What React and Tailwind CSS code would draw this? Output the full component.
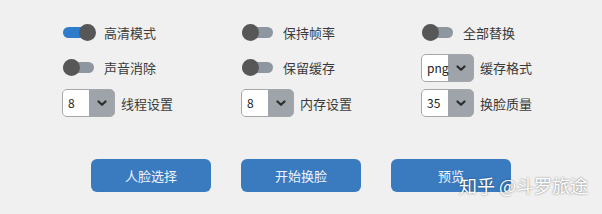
import { useState } from "react";

const FONT = { fontFamily: '"Noto Sans CJK SC", "Noto Sans", sans-serif' };

function Toggle({ on }) {
  return (
    <div className="relative w-[33px] h-[17px] shrink-0">
      <div
        className={
          "absolute left-0 right-[2px] top-[3px] h-[11px] rounded-full " +
          (on ? "bg-[#2f7ccd]" : "bg-[#8e979f]")
        }
      />
      <div
        className={
          "absolute top-0 w-[17px] h-[17px] rounded-full bg-[#575757] " +
          (on ? "right-0" : "left-0")
        }
      />
    </div>
  );
}

function Chevron() {
  return (
    <svg width="10" height="7" viewBox="0 0 10 7">
      <path d="M1.5 1.5 L5 4.8 L8.5 1.5" fill="none" stroke="#2d2d2d" strokeWidth="2.2" strokeLinecap="round" strokeLinejoin="round" />
    </svg>
  );
}

function Select({ value }) {
  return (
    <div className="flex w-[53px] h-[28px] shrink-0 rounded-[5px] border border-[#a4a8ac] overflow-hidden bg-[#9ea4aa]">
      <div className="w-[26px] h-full bg-white flex items-center pl-[5px] text-[12px] text-[#222]">
        {value}
      </div>
      <div className="flex-1 flex items-center justify-center pt-[1px]">
        <Chevron />
      </div>
    </div>
  );
}

function Item({ children, label, gap }) {
  return (
    <div className={"flex items-center " + gap}>
      {children}
      <span className="text-[13px] text-[#3a3a3a] leading-none">{label}</span>
    </div>
  );
}

export default function App() {
  const [items] = useState([
    { kind: "toggle", on: true, label: "高清模式" },
    { kind: "toggle", on: false, label: "保持帧率" },
    { kind: "toggle", on: false, label: "全部替换" },
    { kind: "toggle", on: false, label: "声音消除" },
    { kind: "toggle", on: false, label: "保留缓存" },
    { kind: "select", value: "png", label: "缓存格式" },
    { kind: "select", value: "8", label: "线程设置" },
    { kind: "select", value: "8", label: "内存设置" },
    { kind: "select", value: "35", label: "换脸质量" },
  ]);

  return (
    <div className="relative w-[602px] h-[214px] bg-[#f0f0f0] overflow-hidden" style={FONT}>
      <div className="grid grid-cols-[179px_180px_120px] grid-rows-[28px_28px_28px] gap-y-[7.5px] pl-[62px] pt-[18px]">
        {items.map((it, i) => (
          <div key={i} className={"flex items-center " + (it.kind === "toggle" ? "pl-[1px]" : "")}>
            {it.kind === "toggle" ? (
              <Item label={it.label} gap="gap-[8px]">
                <Toggle on={it.on} />
              </Item>
            ) : (
              <Item label={it.label} gap="gap-[6px]">
                <Select value={it.value} />
              </Item>
            )}
          </div>
        ))}
      </div>

      <div className="flex gap-[30px] pl-[91px] mt-[42px]">
        {["人脸选择", "开始换脸", "预览"].map((t) => (
          <button
            key={t}
            type="button"
            className="w-[120px] h-[33px] rounded-[6px] bg-[#3a7bc0] text-[#eef3fa] text-[13px] flex items-center justify-center"
          >
            {t}
          </button>
        ))}
      </div>

      {/* watermark */}
      <div
        className="absolute left-[459px] top-[176px] text-[18px] leading-none text-white whitespace-nowrap"
        style={{ textShadow: "0 0 2px rgba(0,0,0,0.55)" }}
      >
        知乎 @斗罗旅途
      </div>
    </div>
  );
}
